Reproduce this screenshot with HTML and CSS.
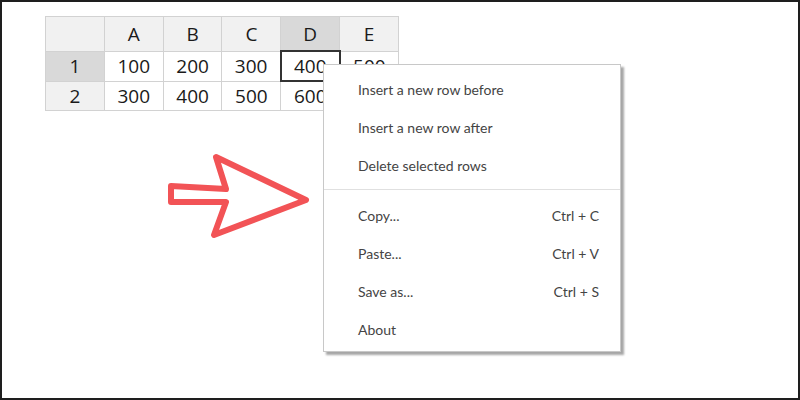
FILE: index.html
```html
<!DOCTYPE html>
<html>
<head>
<meta charset="utf-8">
<link rel="stylesheet" href="styles.css">
</head>
<body>
<div class="frame">
  <table class="sheet">
    <tr class="head">
      <th class="corner"></th>
      <th>A</th><th>B</th><th>C</th><th class="hl">D</th><th>E</th>
    </tr>
    <tr>
      <th class="hl">1</th>
      <td>100</td><td>200</td><td>300</td><td class="sel">400</td><td>500</td>
    </tr>
    <tr>
      <th>2</th>
      <td>300</td><td>400</td><td>500</td><td>600</td><td>700</td>
    </tr>
  </table>

  <svg class="arrow" width="160" height="100" viewBox="160 150 160 100">
    <polygon points="171,186 226,189 216,157 306,200 214,235 226,202 171,202" fill="none" stroke="#f25356" stroke-width="6" stroke-linejoin="round"/>
  </svg>

  <div class="menu">
    <div class="item">Insert a new row before</div>
    <div class="item">Insert a new row after</div>
    <div class="item">Delete selected rows</div>
    <div class="sep"></div>
    <div class="item"><span>Copy...</span><span class="key">Ctrl + C</span></div>
    <div class="item"><span>Paste...</span><span class="key">Ctrl + V</span></div>
    <div class="item"><span>Save as...</span><span class="key">Ctrl + S</span></div>
    <div class="item">About</div>
  </div>
</div>
</body>
</html>
```

FILE: styles.css
```css
html, body {
  margin: 0;
  padding: 0;
  background: #fff;
}
.frame {
  position: relative;
  box-sizing: border-box;
  width: 800px;
  height: 400px;
  border: 2px solid #1e1e1e;
  padding: 14px 0 0 43px;
  overflow: hidden;
}
.sheet {
  border-collapse: collapse;
  table-layout: fixed;
  width: 354px;
  font-family: "Open Sans", sans-serif;
  font-size: 19px;
  color: #1a1a1a;
}
.sheet th, .sheet td {
  border: 1px solid #d2d2d2;
  height: 28px;
  padding: 0;
  text-align: center;
  font-weight: normal;
  line-height: 20px;
}
.sheet .head th {
  height: 33px;
  background: #f1f1f1;
}
.sheet th {
  background: #f1f1f1;
}
.sheet th.hl {
  background: #d9d9d9;
}
.sheet td.sel {
  border: 2px solid #333;
}
.arrow {
  position: absolute;
  left: 158px;
  top: 148px;
}
.menu {
  position: absolute;
  left: 321px;
  top: 62px;
  width: 298px;
  box-sizing: border-box;
  background: #fff;
  border: 1px solid #c8c8c8;
  box-shadow: 3px 3px 2px rgba(0, 0, 0, 0.35);
  padding: 5px 0 3px;
  font-family: "Lato", sans-serif;
  font-size: 14px;
  color: #444;
}
.item {
  display: flex;
  justify-content: space-between;
  align-items: center;
  height: 38px;
  padding: 0 21px 0 34px;
}
.key {
  color: #444;
}
.sep {
  height: 1px;
  background: #e0e0e0;
  margin: 5px 0 6px;
}
```
